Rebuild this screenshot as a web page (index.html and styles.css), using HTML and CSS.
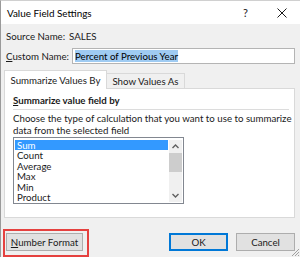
FILE: index.html
```html
<!DOCTYPE html>
<html>
<head>
    <title>Value Field Settings</title>
    <link rel="stylesheet" href="styles.css">
</head>
<body>

    <div class="dialog">
        <!-- window caption -->
        <div class="titlebar">
            <span class="title">Value Field Settings</span>
            <span class="help">?</span>
            <svg class="close" width="10" height="10" viewBox="0 0 10 10">
                <path d="M0.5 0.5 L9.5 9.5 M9.5 0.5 L0.5 9.5" stroke="#1a1a1a" stroke-width="1"/>
            </svg>
        </div>

        <div class="content">
            <div class="source-row">
                <span class="source-label">Source Name:</span>
                <span>SALES</span>
            </div>

            <div class="custom-row">
                <span class="custom-label"><u>C</u>ustom Name:</span>
                <div class="textbox"><span class="selected-text">Percent of Previous Year</span></div>
            </div>

            <div class="tabs">
                <div class="tab active">Summarize Values By</div>
                <div class="tab">Show Values As</div>
            </div>

            <div class="panel">
                <div class="section-title"><u>S</u>ummarize value field by</div>
                <p class="desc">Choose the type of calculation that you want to use to summarize<br>data from the selected field</p>

                <div class="listbox">
                    <ul class="items">
                        <li class="selected">Sum</li>
                        <li>Count</li>
                        <li>Average</li>
                        <li>Max</li>
                        <li>Min</li>
                        <li>Product</li>
                    </ul>
                    <div class="scrollbar">
                        <svg class="arrow" width="13" height="13" viewBox="0 0 13 13">
                            <path d="M3.5 8 L6.5 5 L9.5 8" fill="none" stroke="#606060" stroke-width="1.4"/>
                        </svg>
                        <div class="thumb"></div>
                        <div class="track"></div>
                        <svg class="arrow" width="13" height="13" viewBox="0 0 13 13">
                            <path d="M3.5 5 L6.5 8 L9.5 5" fill="none" stroke="#606060" stroke-width="1.4"/>
                        </svg>
                    </div>
                </div>
            </div>

            <div class="buttons">
                <!-- red box is the screenshot annotation -->
                <div class="callout">
                    <button class="btn"><u>N</u>umber Format</button>
                </div>
                <div class="spacer"></div>
                <button class="btn default">OK</button>
                <button class="btn">Cancel</button>
            </div>
        </div>

        <svg class="grip" width="9" height="9" viewBox="0 0 9 9">
            <path d="M8 1 L1 8 M8 4 L4 8 M8 7 L7 8" stroke="#a0a0a0" stroke-width="1"/>
        </svg>
    </div>

</body>
</html>
```

FILE: styles.css
```css
body {
    margin: 0;
    padding: 0;
    font-family: Lato, "Noto Sans", sans-serif;
    font-size: 9.7px;
    color: #1a1a1a;
    white-space: nowrap;
}

.dialog {
    position: relative;
    width: 299px;
    height: 256px;
    border-left: 1px solid #9a9a9a;
    border-top: 1px solid #d0d0d0;
    background-color: #f0f0f0;
}

.titlebar {
    display: flex;
    align-items: center;
    height: 23px;
    padding-left: 6px;
    background-color: #ffffff;
}

.title {
    flex: 1;
    font-size: 9.9px;
    color: #000;
}

.help {
    font-size: 11px;
    margin-right: 29px;
}

.close {
    margin-right: 13px;
}

.content {
    padding: 0 5px 0 3px;
}

.source-row {
    display: flex;
    margin-top: 5px;
    height: 14px;
    line-height: 14px;
    padding-left: 2px;
}

.source-label {
    flex-shrink: 0;
    width: 63px;
}

.custom-row {
    display: flex;
    align-items: center;
    margin-top: 5px;
    height: 16px;
    padding-left: 2px;
}

.custom-label {
    flex-shrink: 0;
    width: 66px;
}

.textbox {
    flex: 1;
    height: 14px;
    line-height: 14px;
    border: 1px solid #b4b4b4;
    background-color: #ffffff;
    padding-left: 2px;
}

.selected-text {
    background-color: #9fcbf2;
    color: #000;
}

.tabs {
    display: flex;
    align-items: flex-end;
    margin-top: 6px;
    height: 18px;
}

.tab {
    box-sizing: border-box;
    flex-shrink: 0;
    height: 15px;
    line-height: 14px;
    text-align: center;
    border: 1px solid #d9d9d9;
    border-bottom: none;
    background-color: #f0f0f0;
}

.tab.active {
    position: relative;
    z-index: 1;
    width: 103px;
    height: 19px;
    line-height: 18px;
    margin-bottom: -1px;
    background-color: #ffffff;
}

.tab + .tab {
    border-left: none;
    width: 78px;
}

.panel {
    box-sizing: border-box;
    height: 130px;
    border: 1px solid #d9d9d9;
    background-color: #ffffff;
    padding: 5px 5px 0 8px;
}

.section-title {
    font-weight: bold;
    line-height: 12px;
    padding-bottom: 3px;
    border-bottom: 1px solid #dcdcdc;
}

.desc {
    margin: 2px 0 1px 0;
    line-height: 12px;
}

.listbox {
    display: flex;
    box-sizing: border-box;
    width: 171px;
    height: 67px;
    padding: 2px 1px 1px 1px;
    border: 1px solid #828790;
    background-color: #ffffff;
}

.items {
    list-style: none;
    margin: 0;
    padding: 0;
    width: 153px;
    margin-right: 1px;
    overflow: hidden;
}

.items li {
    line-height: 10.4px;
    height: 10.4px;
    padding-left: 2px;
}

.items li.selected {
    background-color: #3399ff;
    color: #ffffff;
}

.scrollbar {
    display: flex;
    flex-direction: column;
    width: 13px;
    background-color: #f0f0f0;
}

.thumb {
    height: 19px;
    background-color: #cdcdcd;
}

.track {
    flex: 1;
}

.buttons {
    display: flex;
    align-items: flex-start;
    margin-top: 11px;
}

.callout {
    margin-left: -1px;
    padding: 2px 4px 4px 1px;
    border: 2px solid #e5413f;
}

.spacer {
    flex: 1;
}

.btn {
    box-sizing: border-box;
    flex-shrink: 0;
    height: 18px;
    width: 59px;
    padding: 0;
    font-family: inherit;
    font-size: 9.7px;
    color: #1a1a1a;
    background-color: #e1e1e1;
    border: 1px solid #adadad;
    margin-top: 4px;
}

.callout .btn {
    width: 77px;
    margin-top: 0;
}

.btn.default {
    border: 2px solid #0078d7;
    margin-right: 8px;
}

.grip {
    position: absolute;
    right: 0;
    bottom: 0;
}
```
